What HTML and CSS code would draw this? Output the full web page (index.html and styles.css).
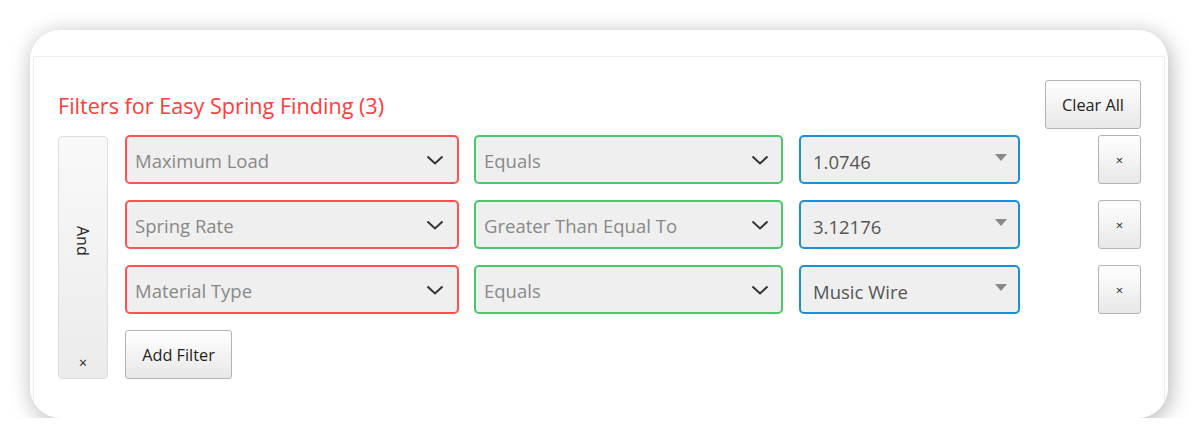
FILE: index.html
```html
<!DOCTYPE html>
<html>
	<head>
		<link rel="stylesheet" href="styles.css">
	</head>
	<body>
		<div class="card">
			<div class="panel">
				<div class="head">
					<div class="title">Filters for Easy Spring Finding (3)</div>
					<button class="btn clear">Clear All</button>
				</div>
				<div class="body">
					<div class="andbox">
						<span class="andtxt">And</span>
						<span class="andx">&times;</span>
					</div>
					<div class="rows">
						<div class="row">
							<div class="sel field">Maximum Load<svg class="chev" viewBox="0 0 18 10"><path d="M1.5 1.5 L9 8.5 L16.5 1.5"/></svg></div>
							<div class="sel op">Equals<svg class="chev" viewBox="0 0 18 10"><path d="M1.5 1.5 L9 8.5 L16.5 1.5"/></svg></div>
							<div class="sel val">1.0746<span class="caret"></span></div>
							<button class="btn rm">&times;</button>
						</div>
						<div class="row">
							<div class="sel field">Spring Rate<svg class="chev" viewBox="0 0 18 10"><path d="M1.5 1.5 L9 8.5 L16.5 1.5"/></svg></div>
							<div class="sel op">Greater Than Equal To<svg class="chev" viewBox="0 0 18 10"><path d="M1.5 1.5 L9 8.5 L16.5 1.5"/></svg></div>
							<div class="sel val">3.12176<span class="caret"></span></div>
							<button class="btn rm">&times;</button>
						</div>
						<div class="row">
							<div class="sel field">Material Type<svg class="chev" viewBox="0 0 18 10"><path d="M1.5 1.5 L9 8.5 L16.5 1.5"/></svg></div>
							<div class="sel op">Equals<svg class="chev" viewBox="0 0 18 10"><path d="M1.5 1.5 L9 8.5 L16.5 1.5"/></svg></div>
							<div class="sel val">Music Wire<span class="caret"></span></div>
							<button class="btn rm">&times;</button>
						</div>
						<div class="row">
							<button class="btn add">Add Filter</button>
						</div>
					</div>
				</div>
			</div>
		</div>
	</body>
</html>
```

FILE: styles.css
```css
body{
	margin: 0;
	background-color: #fff;
	font-family: "Open Sans", "Noto Sans", sans-serif;
}
.card{
	margin: 30px 0 0 30px;
	width: 1138px;
	height: 388px;
	border-radius: 30px;
	background-color: #fff;
	box-shadow: 2px 4px 22px rgba(0,0,0,0.3);
	overflow: hidden;
}
.panel{
	margin: 26px 3px 0 3px;
	height: 400px;
	border: 1px solid #eee;
	border-bottom: none;
	padding: 23px 23px 0 24px;
}
.head{
	display: flex;
	align-items: center;
	justify-content: space-between;
	height: 49px;
}
.title{
	color: #ff3b3b;
	font-size: 21.6px;
	padding-top: 1px;
}
.btn{
	font-family: "Open Sans", "Noto Sans", sans-serif;
	color: #222;
	background: linear-gradient(#fff, #e8e8e8);
	border: 1px solid #b3b3b3;
	border-radius: 3px;
	height: 49px;
	padding: 0;
	cursor: pointer;
}
.clear{
	width: 96px;
	font-size: 16.3px;
}
.body{
	display: flex;
	margin-top: 6px;
	gap: 17px;
}
.andbox{
	width: 50px;
	margin-top: 1px;
	box-sizing: border-box;
	border: 1px solid #ddd;
	border-radius: 4px;
	background: linear-gradient(#f9f9f9, #ebebeb);
	display: flex;
	flex-direction: column;
	align-items: center;
	justify-content: space-between;
	padding: 89px 0 6px 0;
	color: #222;
}
.andtxt{
	writing-mode: vertical-rl;
	font-size: 16px;
}
.andx{
	font-size: 14px;
}
.rows{
	display: flex;
	flex-direction: column;
	gap: 16px;
	flex: 1;
}
.row{
	display: flex;
	align-items: center;
	height: 49px;
}
.sel{
	box-sizing: border-box;
	height: 49px;
	background-color: #efefef;
	border: 2px solid #ccc;
	border-radius: 5px;
	display: flex;
	align-items: center;
	justify-content: space-between;
	font-size: 18.5px;
	color: #888;
	padding-left: 8px;
	padding-top: 2px;
}
.field{
	width: 334px;
	border-color: #ff5252;
	padding-right: 13px;
}
.op{
	width: 309px;
	margin-left: 15px;
	border-color: #4cc66a;
	padding-right: 12px;
}
.val{
	width: 221px;
	margin-left: 16px;
	border-color: #1a90d6;
	color: #555;
	padding-left: 12px;
	padding-right: 11px;
	padding-top: 4px;
}
.chev{
	width: 18px;
	height: 10px;
	fill: none;
	stroke: #333;
	stroke-width: 2;
	margin-top: -2px;
}
.caret{
	width: 0;
	height: 0;
	border-left: 6px solid transparent;
	border-right: 6px solid transparent;
	border-top: 7px solid #888;
	align-self: flex-start;
	margin-top: 13px;
}
.rm{
	width: 43px;
	margin-left: auto;
	font-size: 13px;
}
.add{
	width: 107px;
	font-size: 16.3px;
}
```
